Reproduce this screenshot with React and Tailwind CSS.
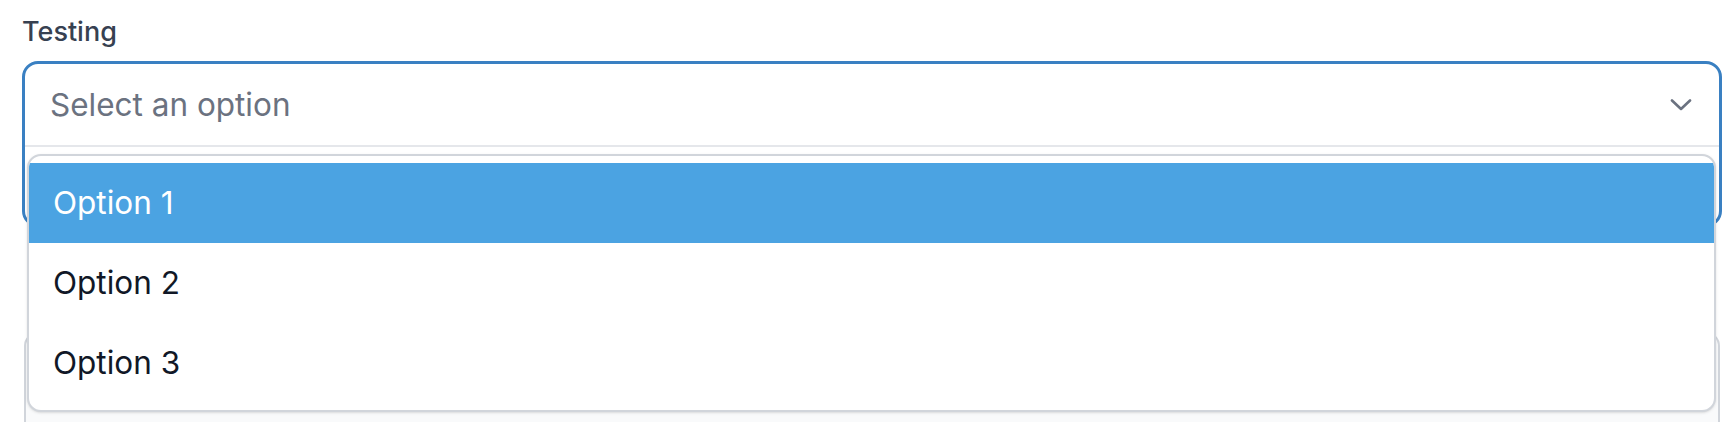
export default function App() {
  const options = ["Option 1", "Option 2", "Option 3"];
  const active = 0;

  return (
    <div className="h-screen overflow-hidden bg-white font-['Inter','Noto_Sans',sans-serif]">
      <div className="relative pl-[22px] pr-[12px] pt-[12px]">
        {/* label */}
        <label className="block h-[40px] text-[27px] leading-[40px] font-medium text-[#374151]">
          Testing
        </label>

        {/* select box (focused) */}
        <div className="mt-[9px] h-[166px] rounded-[16px] border-[3px] border-[#3a80c2] bg-white overflow-hidden">
          <button
            type="button"
            className="flex h-[81px] w-full items-center justify-between pl-[25px] pr-[27px] text-left"
          >
            <span className="text-[31.5px] leading-[81px] text-[#6b7280]">Select an option</span>
            <svg width="22" height="12" viewBox="0 0 22 12" fill="none">
              <path d="M2 1.5 11 10 20 1.5" stroke="#6b7280" strokeWidth="2.6" strokeLinecap="round" strokeLinejoin="round" />
            </svg>
          </button>
          <div className="h-[2px] bg-[#e5e7eb]" />
        </div>

        {/* next field, partly hidden by the menu */}
        <div className="mt-[105px] mx-[2px] h-[90px] rounded-t-[14px] border-2 border-b-0 border-[#d1d5db] bg-[#f9fafb]" />

        {/* dropdown menu */}
        <ul className="absolute left-[27px] top-[154px] w-[1689px] rounded-[14px] border-2 border-[#d1d5db] bg-white py-[7px] overflow-hidden shadow-sm">
          {options.map((o, i) => (
            <li
              key={o}
              className={
                i === active
                  ? "h-[80px] pl-[24px] text-[31.5px] leading-[80px] bg-[#4ba3e2] text-white"
                  : "h-[80px] pl-[24px] text-[31.5px] leading-[80px] text-[#111827]"
              }
            >
              {o}
            </li>
          ))}
        </ul>
      </div>
    </div>
  );
}
